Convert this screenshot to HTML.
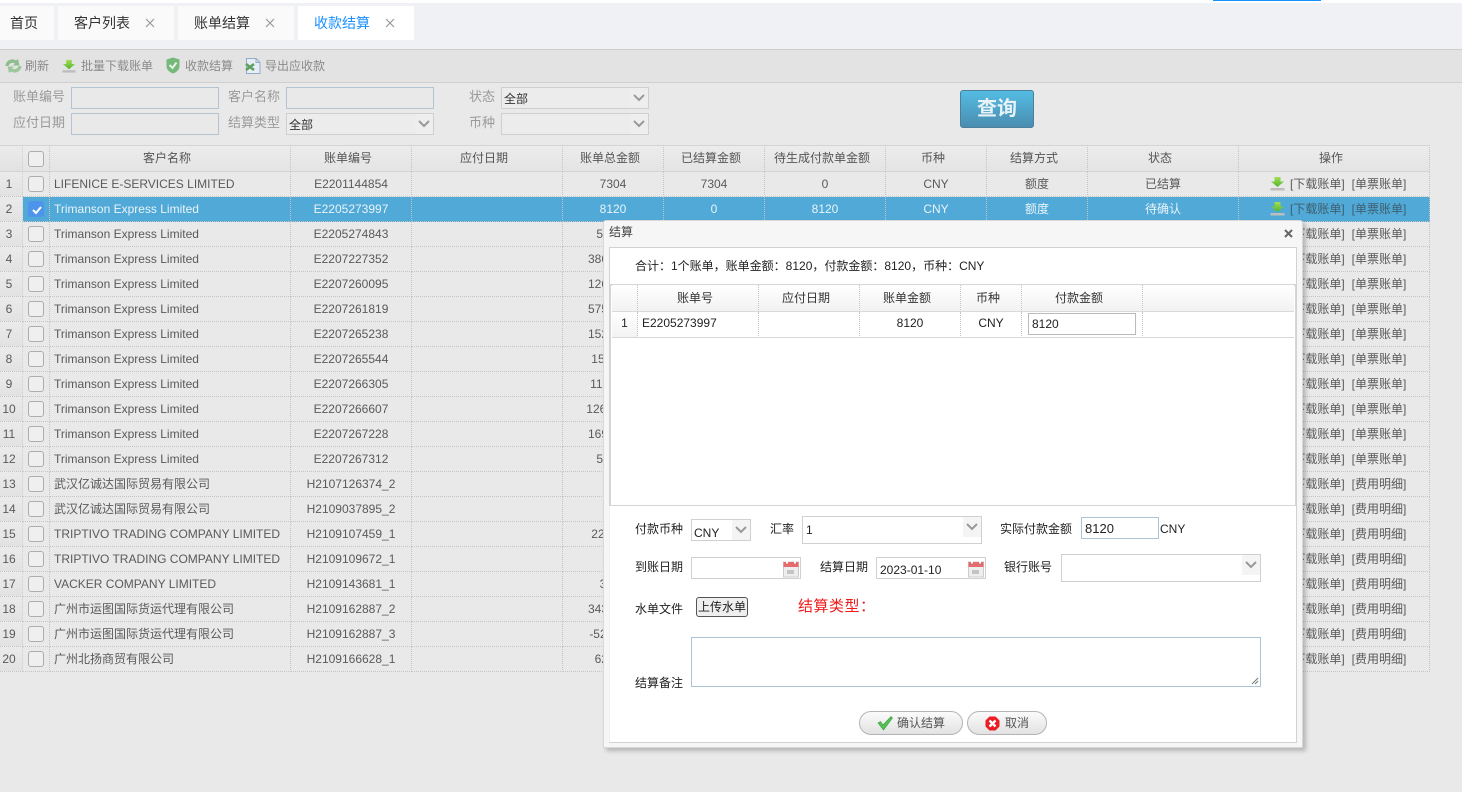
<!DOCTYPE html>
<html lang="zh"><head><meta charset="utf-8"><title>收款结算</title>
<style>
*{box-sizing:border-box}
html,body{margin:0;padding:0;width:1462px;height:792px;overflow:hidden;background:#e9e9e9;font:12px "Liberation Sans","Noto Sans CJK SC",sans-serif;color:#555}
.a{position:absolute;white-space:nowrap}
.tab{position:absolute;top:6px;height:34px;background:#fafafa;font-size:14px;line-height:34px;color:#333}
.tab i{position:absolute;left:16px;font-style:normal}
.tab svg{position:absolute;left:87px;top:12px}
.lb{position:absolute;white-space:nowrap;font-size:13px;line-height:16px;color:#9a9a9a}
.in{position:absolute;height:22px;background:#e9e9e9;border:1px solid #b3c3d0}
.sel{position:absolute;height:22px;background:#ececec;border:1px solid #cfcfcf;font-size:12px;line-height:22px;padding-left:2px;color:#333}
.arr{position:absolute;right:0;top:0;width:18px;height:100%;background:#eee}
.arr svg{position:absolute;left:3px;top:50%;margin-top:-4px}
.tb{position:absolute;white-space:nowrap;color:#8a8a8a;font-size:12px;line-height:16px;top:58px}
table{border-collapse:separate;border-spacing:0;table-layout:fixed;position:absolute}
#g{left:0;top:145px;width:1430px}
#g th{height:27px;font-weight:normal;border-top:1px solid #d4d4d4;border-bottom:1px solid #d4d4d4;border-right:1px dotted #c4c4c4;background:linear-gradient(#ececec,#e4e4e4);padding:0 6px 2px 0;color:#555;text-align:center}
#g th:nth-child(2){padding:0}
#g td{height:25px;padding:0;border-bottom:1px dotted #c4c4c4;border-right:1px dotted #c4c4c4;text-align:center;white-space:nowrap;overflow:hidden;color:#5a5a5a}
#g td:first-child,#g th:first-child{background:linear-gradient(#ebebeb,#e2e2e2);padding-right:4px;border-right:1px dotted #cfcfcf}
#g td.n{text-align:left;padding-left:4px}
#g td.c{padding-bottom:2px}
#g td.op{text-align:left;padding-left:31px;padding-bottom:2px;position:relative}
#g td.op svg{vertical-align:-3px;margin-right:5px}
#g td.op b{font-weight:normal;margin-left:7px}
#g tr.s td{background:#50a9d6;color:#e9f4fa}
#g tr.s td:first-child{background:linear-gradient(#ebebeb,#e2e2e2);color:#555}
#g tr.s td.op{color:#3f5f6f}
.cb{display:inline-block;width:16px;height:16px;vertical-align:middle;border:1px solid #adadad;border-radius:3px;background:#efefef;position:relative}
.cb.on{background:#4f94ec;border-color:#4f94ec}
.cb svg{position:absolute;left:1px;top:1px}
#d{position:absolute;left:603px;top:220px;width:700px;height:528px;background:#f6f6f6;border:1px solid #d8d8d8;border-radius:3px 3px 0 0;box-shadow:3px 3px 4px rgba(0,0,0,.22)}
#p{position:absolute;left:609px;top:247px;width:688px;height:496px;background:#fff;border:1px solid #d2d2d2}
#m{left:612px;top:285px;width:682px}
#m th{height:27px;font-weight:normal;border-bottom:1px solid #d9d9d9;border-right:1px dotted #c4c4c4;background:linear-gradient(#fff,#f2f2f2);color:#333;padding:0 6px 1px 0}
#m td{height:26px;padding:0 0 3px;text-align:center;color:#222;border-bottom:1px solid #d9d9d9;border-right:1px dotted #c4c4c4;white-space:nowrap}
.f{position:absolute;white-space:nowrap;color:#222;font-size:12px;line-height:16px}
.w{position:absolute;background:#fff;border:1px solid #d0d0d0;color:#222;font-size:13px}
.bt{position:absolute;top:711px;height:24px;border:1px solid #b4b4b4;border-radius:12px;background:linear-gradient(#fbfbfb,#e2e2e2);color:#555;font-size:12px;line-height:22px}
.bt svg{position:absolute}
.bt span{position:absolute;white-space:nowrap}
</style></head><body>
<svg width="0" height="0" style="position:absolute">
<defs>
<linearGradient id="gr" x1="0" y1="0" x2="0" y2="1"><stop offset="0" stop-color="#a5dd55"/><stop offset="1" stop-color="#4fb52c"/></linearGradient>
<symbol id="dl" viewBox="0 0 15 15"><path d="M4.500 1h6v4.500h3.500L7.500 11 1 5.500h3.500z" fill="url(#gr)"/><rect x="0.500" y="12" width="14" height="2.500" fill="#bdbdbd"/></symbol>
<symbol id="cal" viewBox="0 0 16 18"><rect x="0.500" y="2" width="15" height="15" fill="#eee" stroke="#ccc"/><rect x="0.500" y="2" width="15" height="5" fill="#e46c6c"/><rect x="3" y="0.500" width="2" height="3" fill="#fff"/><rect x="11" y="0.500" width="2" height="3" fill="#fff"/><rect x="4" y="10" width="7" height="4" fill="#c4c4c4"/></symbol>
</defs></svg>

<div class="a" style="left:0;top:0;width:1462px;height:49px;background:#f0f1f5"></div>
<div class="a" style="left:0;top:0;width:1462px;height:3px;background:#fff"></div>
<div class="a" style="left:1213px;top:0;width:108px;height:1px;background:#1890ff"></div>
<div class="tab" style="left:0;width:54px"><i style="left:10px">首页</i></div>
<div class="tab" style="left:58px;width:116px"><i>客户列表</i><svg width="10" height="10"><path d="M1 1l8 8M9 1l-8 8" stroke="#999" stroke-width="1.200"/></svg></div>
<div class="tab" style="left:178px;width:116px"><i>账单结算</i><svg width="10" height="10"><path d="M1 1l8 8M9 1l-8 8" stroke="#999" stroke-width="1.200"/></svg></div>
<div class="tab" style="left:298px;width:116px;background:#fff;color:#1890ff"><i>收款结算</i><svg width="10" height="10"><path d="M1 1l8 8M9 1l-8 8" stroke="#999" stroke-width="1.200"/></svg></div>

<div class="a" style="left:0;top:49px;width:1462px;height:34px;background:#e3e3e3;border-top:1px solid #cfcfcf;border-bottom:1px solid #cfcfcf"></div>
<svg class="a" style="left:5px;top:58px" width="17" height="16" viewBox="0 0 17 16"><path d="M0.500 8C0.500 3 6.500 -0.500 11 2.500L13 1 14.500 7.500H8L10 5.500C7.500 4.200 4.500 5 3.500 8z" fill="#8dbd8d"/><path d="M16.500 8C16.500 13 10.500 16.500 6 13.500L4 15 2.500 8.500H9L7 10.500C9.500 11.800 12.500 11 13.500 8z" fill="#9cc79c"/></svg>
<div class="tb" style="left:25px">刷新</div>
<svg class="a" style="left:62px;top:59px" width="14" height="14"><use href="#dl"/></svg>
<div class="tb" style="left:81px">批量下载账单</div>
<svg class="a" style="left:166px;top:57px" width="14" height="17" viewBox="0 0 14 17"><path d="M7 0.500L13.500 2.500V9C13.500 13 10 15.500 7 16.500 4 15.500 0.500 13 0.500 9V2.500z" fill="#74b87a"/><path d="M3.500 8l3 3 4-5.500" fill="none" stroke="#e8f3e8" stroke-width="2"/></svg>
<div class="tb" style="left:185px">收款结算</div>
<svg class="a" style="left:245px;top:58px" width="16" height="16" viewBox="0 0 16 16"><path d="M1.500 0.500H11L15 4.500V15.500H1.500z" fill="#e6edf3" stroke="#8faccc"/><path d="M11 0.500V4.500H15" fill="none" stroke="#8faccc"/><path d="M1 6l8 6M9 6l-8 6" stroke="#5f9f5f" stroke-width="2.600"/></svg>
<div class="tb" style="left:265px">导出应收款</div>

<div class="lb" style="left:13px;top:89px">账单编号</div><div class="in" style="left:71px;top:87px;width:148px"></div>
<div class="lb" style="left:228px;top:89px">客户名称</div><div class="in" style="left:286px;top:87px;width:148px"></div>
<div class="lb" style="left:469px;top:89px">状态</div><div class="sel" style="left:501px;top:87px;width:148px">全部<div class="arr"><svg width="12" height="8"><path d="M1 1l5 5 5-5" fill="none" stroke="#999" stroke-width="2"/></svg></div></div>
<div class="lb" style="left:13px;top:115px">应付日期</div><div class="in" style="left:71px;top:113px;width:148px"></div>
<div class="lb" style="left:228px;top:115px">结算类型</div><div class="sel" style="left:286px;top:113px;width:148px">全部<div class="arr"><svg width="12" height="8"><path d="M1 1l5 5 5-5" fill="none" stroke="#999" stroke-width="2"/></svg></div></div>
<div class="lb" style="left:469px;top:115px">币种</div><div class="sel" style="left:501px;top:113px;width:148px"><div class="arr"><svg width="12" height="8"><path d="M1 1l5 5 5-5" fill="none" stroke="#999" stroke-width="2"/></svg></div></div>
<div class="a" style="left:960px;top:90px;width:74px;height:38px;border:1px solid #4b7f9c;border-radius:3px;background:linear-gradient(#54bce3,#4a8db0);color:#e8f2f7;font-size:20px;font-weight:bold;line-height:36px;text-align:center">查询</div>

<table id="g"><colgroup><col style="width:23px"><col style="width:27px"><col style="width:241px"><col style="width:121px"><col style="width:151px"><col style="width:101px"><col style="width:101px"><col style="width:121px"><col style="width:101px"><col style="width:101px"><col style="width:151px"><col style="width:191px"></colgroup>
<thead><tr><th></th><th><span class="cb"></span></th><th>客户名称</th><th>账单编号</th><th>应付日期</th><th>账单总金额</th><th>已结算金额</th><th>待生成付款单金额</th><th>币种</th><th>结算方式</th><th>状态</th><th>操作</th></tr></thead>
<tbody>
<tr><td>1</td><td><span class="cb"></span></td><td class="n">LIFENICE E-SERVICES LIMITED</td><td>E2201144854</td><td></td><td>7304</td><td>7304</td><td>0</td><td>CNY</td><td class="c">额度</td><td class="c">已结算</td><td class="op"><svg width="15" height="15"><use href="#dl"/></svg>[下载账单]<b>[单票账单]</b></td></tr>
<tr class="s"><td>2</td><td><span class="cb on"><svg width="14" height="14"><path d="M3 7l3 3 5-6" fill="none" stroke="#fff" stroke-width="2"/></svg></span></td><td class="n">Trimanson Express Limited</td><td>E2205273997</td><td></td><td>8120</td><td>0</td><td>8120</td><td>CNY</td><td class="c">额度</td><td class="c">待确认</td><td class="op"><svg width="15" height="15"><use href="#dl"/></svg>[下载账单]<b>[单票账单]</b></td></tr>
<tr><td>3</td><td><span class="cb"></span></td><td class="n">Trimanson Express Limited</td><td>E2205274843</td><td></td><td>58000</td><td colspan="5"></td><td class="op"><svg width="15" height="15"><use href="#dl"/></svg>[下载账单]<b>[单票账单]</b></td></tr>
<tr><td>4</td><td><span class="cb"></span></td><td class="n">Trimanson Express Limited</td><td>E2207227352</td><td></td><td>38612.50</td><td colspan="5"></td><td class="op"><svg width="15" height="15"><use href="#dl"/></svg>[下载账单]<b>[单票账单]</b></td></tr>
<tr><td>5</td><td><span class="cb"></span></td><td class="n">Trimanson Express Limited</td><td>E2207260095</td><td></td><td>12612.50</td><td colspan="5"></td><td class="op"><svg width="15" height="15"><use href="#dl"/></svg>[下载账单]<b>[单票账单]</b></td></tr>
<tr><td>6</td><td><span class="cb"></span></td><td class="n">Trimanson Express Limited</td><td>E2207261819</td><td></td><td>57512.50</td><td colspan="5"></td><td class="op"><svg width="15" height="15"><use href="#dl"/></svg>[下载账单]<b>[单票账单]</b></td></tr>
<tr><td>7</td><td><span class="cb"></span></td><td class="n">Trimanson Express Limited</td><td>E2207265238</td><td></td><td>15212.50</td><td colspan="5"></td><td class="op"><svg width="15" height="15"><use href="#dl"/></svg>[下载账单]<b>[单票账单]</b></td></tr>
<tr><td>8</td><td><span class="cb"></span></td><td class="n">Trimanson Express Limited</td><td>E2207265544</td><td></td><td>1512.50</td><td colspan="5"></td><td class="op"><svg width="15" height="15"><use href="#dl"/></svg>[下载账单]<b>[单票账单]</b></td></tr>
<tr><td>9</td><td><span class="cb"></span></td><td class="n">Trimanson Express Limited</td><td>E2207266305</td><td></td><td>1125000</td><td colspan="5"></td><td class="op"><svg width="15" height="15"><use href="#dl"/></svg>[下载账单]<b>[单票账单]</b></td></tr>
<tr><td>10</td><td><span class="cb"></span></td><td class="n">Trimanson Express Limited</td><td>E2207266607</td><td></td><td>12612345</td><td colspan="5"></td><td class="op"><svg width="15" height="15"><use href="#dl"/></svg>[下载账单]<b>[单票账单]</b></td></tr>
<tr><td>11</td><td><span class="cb"></span></td><td class="n">Trimanson Express Limited</td><td>E2207267228</td><td></td><td>16912.50</td><td colspan="5"></td><td class="op"><svg width="15" height="15"><use href="#dl"/></svg>[下载账单]<b>[单票账单]</b></td></tr>
<tr><td>12</td><td><span class="cb"></span></td><td class="n">Trimanson Express Limited</td><td>E2207267312</td><td></td><td>58000</td><td colspan="5"></td><td class="op"><svg width="15" height="15"><use href="#dl"/></svg>[下载账单]<b>[单票账单]</b></td></tr>
<tr><td>13</td><td><span class="cb"></span></td><td class="n c">武汉亿诚达国际贸易有限公司</td><td>H2107126374_2</td><td></td><td></td><td colspan="5"></td><td class="op"><svg width="15" height="15"><use href="#dl"/></svg>[下载账单]<b>[费用明细]</b></td></tr>
<tr><td>14</td><td><span class="cb"></span></td><td class="n c">武汉亿诚达国际贸易有限公司</td><td>H2109037895_2</td><td></td><td></td><td colspan="5"></td><td class="op"><svg width="15" height="15"><use href="#dl"/></svg>[下载账单]<b>[费用明细]</b></td></tr>
<tr><td>15</td><td><span class="cb"></span></td><td class="n">TRIPTIVO TRADING COMPANY LIMITED</td><td>H2109107459_1</td><td></td><td>2212.50</td><td colspan="5"></td><td class="op"><svg width="15" height="15"><use href="#dl"/></svg>[下载账单]<b>[费用明细]</b></td></tr>
<tr><td>16</td><td><span class="cb"></span></td><td class="n">TRIPTIVO TRADING COMPANY LIMITED</td><td>H2109109672_1</td><td></td><td></td><td colspan="5"></td><td class="op"><svg width="15" height="15"><use href="#dl"/></svg>[下载账单]<b>[费用明细]</b></td></tr>
<tr><td>17</td><td><span class="cb"></span></td><td class="n">VACKER COMPANY LIMITED</td><td>H2109143681_1</td><td></td><td>3000</td><td colspan="5"></td><td class="op"><svg width="15" height="15"><use href="#dl"/></svg>[下载账单]<b>[费用明细]</b></td></tr>
<tr><td>18</td><td><span class="cb"></span></td><td class="n c">广州市运图国际货运代理有限公司</td><td>H2109162887_2</td><td></td><td>34312.50</td><td colspan="5"></td><td class="op"><svg width="15" height="15"><use href="#dl"/></svg>[下载账单]<b>[费用明细]</b></td></tr>
<tr><td>19</td><td><span class="cb"></span></td><td class="n c">广州市运图国际货运代理有限公司</td><td>H2109162887_3</td><td></td><td>-5212.50</td><td colspan="5"></td><td class="op"><svg width="15" height="15"><use href="#dl"/></svg>[下载账单]<b>[费用明细]</b></td></tr>
<tr><td>20</td><td><span class="cb"></span></td><td class="n c">广州北扬商贸有限公司</td><td>H2109166628_1</td><td></td><td>6212.5</td><td colspan="5"></td><td class="op"><svg width="15" height="15"><use href="#dl"/></svg>[下载账单]<b>[费用明细]</b></td></tr>
</tbody></table>

<div id="d"></div>
<div class="a" style="left:609px;top:224px;line-height:16px;color:#444">结算</div>
<svg class="a" style="left:1284px;top:229px" width="9" height="9"><path d="M1 1l7 7M8 1l-7 7" stroke="#666" stroke-width="2"/></svg>
<div id="p"></div>
<div class="a" style="left:609px;top:506px;width:1px;height:236px;background:#f0f0f0"></div>
<div class="f" style="left:635px;top:258px">合计：1个账单，账单金额：8120，付款金额：8120，币种：CNY</div>

<div class="a" style="left:610px;top:284px;width:686px;height:222px;border:1px solid #d6d6d6;border-top:2px solid #d6d6d6;background:#fff"></div>
<table id="m"><colgroup><col style="width:26px"><col style="width:121px"><col style="width:101px"><col style="width:101px"><col style="width:61px"><col style="width:121px"><col style="width:151px"></colgroup>
<tr><th></th><th>账单号</th><th>应付日期</th><th>账单金额</th><th>币种</th><th>付款金额</th><th style="border-right:0"></th></tr>
<tr><td style="background:linear-gradient(#fff,#f3f3f3)">1</td><td style="text-align:left;padding-left:4px">E2205273997</td><td></td><td>8120</td><td>CNY</td><td></td><td style="border-right:0"></td></tr>
</table>
<div class="w" style="left:1028px;top:313px;width:108px;height:22px;line-height:21px;padding-left:3px;font-size:12px;border-color:#bbb">8120</div>

<div class="f" style="left:635px;top:521px">付款币种</div>
<div class="w" style="left:691px;top:519px;width:60px;height:22px;line-height:26px;padding-left:2px;font-size:12px">CNY<div class="arr" style="background:#f4f4f4"><svg width="12" height="8"><path d="M1 1l5 5 5-5" fill="none" stroke="#999" stroke-width="2"/></svg></div></div>
<div class="f" style="left:770px;top:521px">汇率</div>
<div class="w" style="left:802px;top:516px;width:180px;height:28px;line-height:26px;padding-left:3px;font-size:12px">1<div class="arr" style="height:20px;background:#f4f4f4"><svg width="12" height="8"><path d="M1 1l5 5 5-5" fill="none" stroke="#999" stroke-width="2"/></svg></div></div>
<div class="f" style="left:1000px;top:521px">实际付款金额</div>
<div class="w" style="left:1081px;top:517px;width:78px;height:22px;line-height:21px;padding-left:3px;border-color:#a9c3d9">8120</div>
<div class="f" style="left:1160px;top:521px">CNY</div>

<div class="f" style="left:635px;top:559px">到账日期</div>
<div class="w" style="left:691px;top:557px;width:110px;height:22px"><svg style="position:absolute;right:1px;top:2px" width="16" height="18"><use href="#cal"/></svg></div>
<div class="f" style="left:820px;top:559px">结算日期</div>
<div class="w" style="left:876px;top:557px;width:110px;height:22px;line-height:24px;padding-left:3px;font-size:12px">2023-01-10<svg style="position:absolute;right:1px;top:2px" width="16" height="18"><use href="#cal"/></svg></div>
<div class="f" style="left:1004px;top:559px">银行账号</div>
<div class="w" style="left:1061px;top:554px;width:200px;height:28px"><div class="arr" style="height:20px;background:#f4f4f4"><svg width="12" height="8"><path d="M1 1l5 5 5-5" fill="none" stroke="#999" stroke-width="2"/></svg></div></div>

<div class="f" style="left:635px;top:601px">水单文件</div>
<div class="a" style="left:696px;top:597px;width:52px;height:20px;border:1px solid #555;border-radius:3px;background:#efefef;color:#222;line-height:18px;text-align:center">上传水单</div>
<div class="a" style="left:798px;top:597px;color:#f01c1c;font-size:15px;line-height:20px;letter-spacing:.5px">结算类型：</div>

<div class="w" style="left:691px;top:637px;width:570px;height:50px;border-color:#a9c3d9"><svg style="position:absolute;right:1px;bottom:1px" width="8" height="8"><path d="M7 1L1 7M7 4L4 7" stroke="#777"/></svg></div>
<div class="f" style="left:635px;top:675px">结算备注</div>

<div class="bt" style="left:859px;width:104px"><svg style="left:17px;top:4px" width="16" height="15" viewBox="0 0 16 15"><path d="M1 7l2.500-1.500L6 9l8-8.500 1.500 1.500L6.500 14z" fill="#55c155" stroke="#3a9a3a" stroke-width=".6"/></svg><span style="left:37px">确认结算</span></div>
<div class="bt" style="left:967px;width:80px"><svg style="left:17px;top:4px" width="15" height="15" viewBox="0 0 15 15"><path d="M4.500 0.500h6l4 4v6l-4 4h-6l-4-4v-6z" fill="#ec1c24"/><path d="M4.500 4.500l6 6M10.500 4.500l-6 6" stroke="#fff" stroke-width="2.400"/></svg><span style="left:37px">取消</span></div>
</body></html>
